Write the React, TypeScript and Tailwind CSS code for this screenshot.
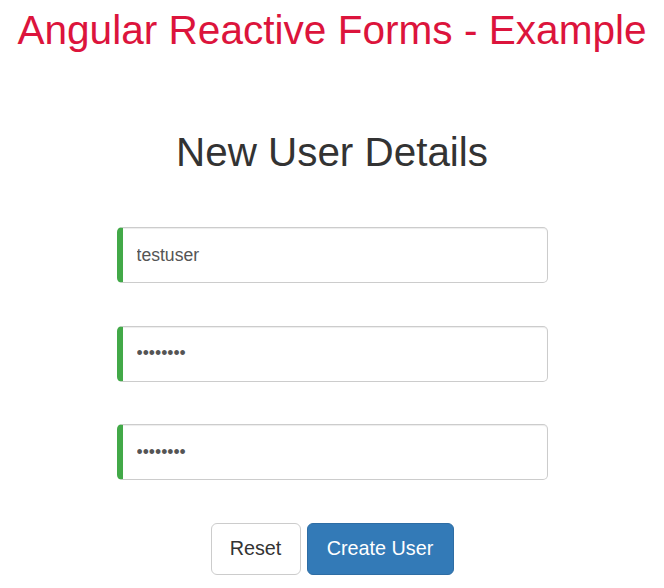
import { useState } from 'react';

export default function App() {
  const [username, setUsername] = useState('testuser');
  const [password, setPassword] = useState('12345678');
  const [confirm, setConfirm] = useState('12345678');

  const inputClass =
    'block w-full h-[56px] rounded-[5px] border border-[#ccc] border-l-[6px] border-l-[#42a948] bg-white pl-[14px] pr-3 text-[17.6px] text-[#555] shadow-[inset_0_1px_1px_rgba(0,0,0,0.075)] outline-none';

  return (
    <div className="min-h-screen bg-white font-['Liberation_Sans',Arial,sans-serif]">
      {/* Title */}
      <h1 className="pt-[10px] text-center text-[40.6px] leading-none text-[#dc143c] whitespace-nowrap">
        Angular Reactive Forms - Example
      </h1>

      {/* Form */}
      <form className="mx-auto mt-[81px] w-[431px]" onSubmit={(e) => e.preventDefault()}>
        <h2 className="text-center text-[40.4px] leading-none text-[#333]">New User Details</h2>

        <div className="mt-[55px] flex flex-col gap-[42.5px]">
          <input
            className={inputClass}
            type="text"
            value={username}
            onChange={(e) => setUsername(e.target.value)}
          />
          <input
            className={inputClass}
            type="password"
            value={password}
            onChange={(e) => setPassword(e.target.value)}
          />
          <input
            className={inputClass}
            type="password"
            value={confirm}
            onChange={(e) => setConfirm(e.target.value)}
          />
        </div>

        <div className="mt-[43px] flex justify-center gap-[6px]">
          <button
            type="reset"
            className="h-[52px] w-[90px] rounded-[6px] border border-[#ccc] bg-white text-[19.8px] text-[#333]"
          >
            Reset
          </button>
          <button
            type="submit"
            className="h-[52px] w-[147px] rounded-[6px] border border-[#2e6da4] bg-[#337ab7] text-[19.8px] text-white"
          >
            Create User
          </button>
        </div>
      </form>
    </div>
  );
}
